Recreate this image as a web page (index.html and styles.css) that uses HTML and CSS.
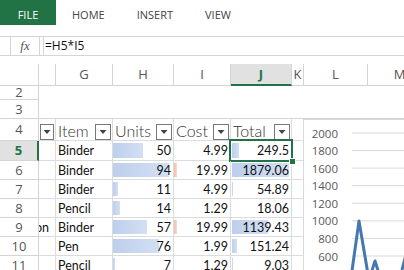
FILE: index.html
```html
<!DOCTYPE html>
<html lang="en">
<head>
    <meta charset="UTF-8">
    <meta name="viewport" content="width=device-width, initial-scale=1.0">
    <title>Sales sheet</title>
    <link rel="stylesheet" href="styles.css">
</head>
<body>
    <div class="ribbon">
        <div class="tab tab-file">FILE</div>
        <div class="tab">HOME</div>
        <div class="tab">INSERT</div>
        <div class="tab">VIEW</div>
    </div>

    <div class="formula-bar">
        <div class="fx">fx</div>
        <div class="formula-input">=H5*I5</div>
    </div>

    <div class="sheet">
        <div class="row col-heads">
            <div class="col-head"></div>
            <div class="col-head"></div>
            <div class="col-head">G</div>
            <div class="col-head">H</div>
            <div class="col-head">I</div>
            <div class="col-head selected">J</div>
            <div class="col-head">K</div>
            <div class="col-head">L</div>
            <div class="col-head">M</div>
        </div>

        <div class="row row-2">
            <div class="rowhead">2</div>
            <div class="blank"></div>
        </div>
        <div class="row row-3">
            <div class="rowhead">3</div>
            <div class="blank blank-line"></div>
        </div>

        <div class="row row-4">
            <div class="rowhead">4</div>
            <div class="cell th"><span class="dd dd-narrow"></span></div>
            <div class="cell th"><span class="th-text">Item</span><span class="dd"></span></div>
            <div class="cell th"><span class="th-text">Units</span><span class="dd"></span></div>
            <div class="cell th"><span class="th-text">Cost</span><span class="dd"></span></div>
            <div class="cell th"><span class="th-text">Total</span><span class="dd"></span></div>
            <div class="cell"></div>
            <div class="cell"></div>
            <div class="cell"></div>
        </div>

        <div class="row row-5">
            <div class="rowhead selected">5</div>
            <div class="cell"></div>
            <div class="cell">Binder</div>
            <div class="cell num"><span class="bar" style="width:30px"></span><span class="val">50</span></div>
            <div class="cell num"><span class="val">4.99</span></div>
            <div class="cell num active"><span class="bar bar-total" style="width:7px"></span><span class="val">249.5</span></div>
            <div class="cell"></div>
            <div class="cell"></div>
            <div class="cell"></div>
        </div>

        <div class="row">
            <div class="rowhead">6</div>
            <div class="cell"></div>
            <div class="cell">Binder</div>
            <div class="cell num"><span class="bar" style="width:56px"></span><span class="val">94</span></div>
            <div class="cell num"><span class="bar bar-cost" style="width:3px"></span><span class="val">19.99</span></div>
            <div class="cell num"><span class="bar bar-total" style="width:57px"></span><span class="val">1879.06</span></div>
            <div class="cell"></div>
            <div class="cell"></div>
            <div class="cell"></div>
        </div>

        <div class="row">
            <div class="rowhead">7</div>
            <div class="cell"></div>
            <div class="cell">Binder</div>
            <div class="cell num"><span class="bar" style="width:5px"></span><span class="val">11</span></div>
            <div class="cell num"><span class="val">4.99</span></div>
            <div class="cell num"><span class="bar bar-total" style="width:1px"></span><span class="val">54.89</span></div>
            <div class="cell"></div>
            <div class="cell"></div>
            <div class="cell"></div>
        </div>

        <div class="row">
            <div class="rowhead">8</div>
            <div class="cell"></div>
            <div class="cell">Pencil</div>
            <div class="cell num"><span class="bar" style="width:7px"></span><span class="val">14</span></div>
            <div class="cell num"><span class="val">1.29</span></div>
            <div class="cell num"><span class="val">18.06</span></div>
            <div class="cell"></div>
            <div class="cell"></div>
            <div class="cell"></div>
        </div>

        <div class="row">
            <div class="rowhead">9</div>
            <div class="cell clip">on</div>
            <div class="cell">Binder</div>
            <div class="cell num"><span class="bar" style="width:34px"></span><span class="val">57</span></div>
            <div class="cell num"><span class="bar bar-cost" style="width:3px"></span><span class="val">19.99</span></div>
            <div class="cell num"><span class="bar bar-total" style="width:36px"></span><span class="val">1139.43</span></div>
            <div class="cell"></div>
            <div class="cell"></div>
            <div class="cell"></div>
        </div>

        <div class="row">
            <div class="rowhead">10</div>
            <div class="cell"></div>
            <div class="cell">Pen</div>
            <div class="cell num"><span class="bar" style="width:46px"></span><span class="val">76</span></div>
            <div class="cell num"><span class="val">1.99</span></div>
            <div class="cell num"><span class="bar bar-total" style="width:5px"></span><span class="val">151.24</span></div>
            <div class="cell"></div>
            <div class="cell"></div>
            <div class="cell"></div>
        </div>

        <div class="row">
            <div class="rowhead">11</div>
            <div class="cell"></div>
            <div class="cell">Pencil</div>
            <div class="cell num"><span class="bar" style="width:2px"></span><span class="val">7</span></div>
            <div class="cell num"><span class="val">1.29</span></div>
            <div class="cell num"><span class="bar bar-total" style="width:1px"></span><span class="val">9.03</span></div>
            <div class="cell"></div>
            <div class="cell"></div>
            <div class="cell"></div>
        </div>

        <!-- line chart floating over columns L:M -->
        <div class="chart">
            <svg width="110" height="170" viewBox="0 0 110 170">
                <g class="grid">
                    <line x1="48" y1="13" x2="110" y2="13"/>
                    <line x1="48" y1="30.6" x2="110" y2="30.6"/>
                    <line x1="48" y1="48.1" x2="110" y2="48.1"/>
                    <line x1="48" y1="65.7" x2="110" y2="65.7"/>
                    <line x1="48" y1="83.3" x2="110" y2="83.3"/>
                    <line x1="48" y1="100.9" x2="110" y2="100.9"/>
                    <line x1="48" y1="118.4" x2="110" y2="118.4"/>
                    <line x1="48" y1="136" x2="110" y2="136"/>
                </g>
                <g class="axis">
                    <text x="34" y="13">2000</text>
                    <text x="34" y="30.6">1800</text>
                    <text x="34" y="48.1">1600</text>
                    <text x="34" y="65.7">1400</text>
                    <text x="34" y="83.3">1200</text>
                    <text x="34" y="100.9">1000</text>
                    <text x="34" y="118.4">800</text>
                    <text x="34" y="136">600</text>
                </g>
                <polyline class="series" points="46,165 55,101 65,160 71,141 77,160 94,166 100,142 106,120"/>
            </svg>
        </div>
    </div>
</body>
</html>
```

FILE: styles.css
```css
body {
    margin: 0;
    width: 404px;
    height: 270px;
    overflow: hidden;
    background-color: #fff;
    font-family: "Open Sans", "Liberation Sans", sans-serif;
}

/* ribbon tabs */
.ribbon {
    display: flex;
    align-items: flex-start;
    height: 36px;
    border-bottom: 1px solid #d5d5d5;
}

.tab {
    height: 25px;
    line-height: 29px;
    padding: 0 16px;
    font-size: 11px;
    color: #444;
}

.tab-file {
    width: 56px;
    padding: 0;
    text-align: center;
    background-color: #217346;
    color: #fff;
}

/* formula bar */
.formula-bar {
    display: flex;
    height: 18px;
    border-bottom: 1px solid #d5d5d5;
    margin-bottom: 8px;
}

.fx {
    width: 30px;
    margin-left: 10px;
    box-sizing: border-box;
    border-left: 1px solid #d5d5d5;
    border-right: 1px solid #d5d5d5;
    text-align: center;
    line-height: 18px;
    font-family: "Liberation Serif", serif;
    font-style: italic;
    font-size: 13px;
    color: #555;
}

.formula-input {
    flex: 1;
    margin-left: 3px;
    padding-left: 1px;
    border-left: 1px solid #d5d5d5;
    line-height: 18px;
    font-size: 12px;
    color: #111;
}

/* sheet grid */
.sheet {
    position: relative;
}

.row {
    display: grid;
    grid-template-columns: 39px 17px 57px 61px 57px 61px 12px 64px 64px;
    height: 19px;
}

.row > div {
    box-sizing: border-box;
}

.col-heads { height: 21px; }
.row-2 { height: 15px; }
.row-3 { height: 19px; }
.row-4 { height: 22px; }
.row-5 { height: 20px; }

.col-head {
    border-right: 1px solid #d4d4d4;
    border-bottom: 1px solid #d4d4d4;
    text-align: center;
    line-height: 20px;
    font-size: 13px;
    color: #555;
}

.col-head.selected {
    background-color: #e1e1e1;
    border-bottom: 2px solid #217346;
    color: #217346;
    font-weight: bold;
}

.rowhead {
    display: flex;
    align-items: center;
    justify-content: center;
    border-right: 1px solid #d4d4d4;
    border-bottom: 1px solid #d4d4d4;
    line-height: 1;
    font-size: 13px;
    color: #555;
}

.rowhead.selected {
    background-color: #e1e1e1;
    border-right: 2px solid #217346;
    color: #217346;
    font-weight: bold;
}

.blank {
    grid-column: 2 / -1;
}

.blank-line {
    border-bottom: 1px solid #d4d4d4;
}

.cell {
    position: relative;
    display: flex;
    align-items: center;
    padding: 0 2px;
    border-right: 1px solid #dadcdd;
    border-bottom: 1px solid #dadcdd;
    font-family: Lato, "Liberation Sans", sans-serif;
    font-size: 12.5px;
    color: #111;
    white-space: nowrap;
}

/* text spilling in from the hidden column E */
.cell.clip {
    overflow: hidden;
    justify-content: flex-end;
    padding: 0 6px 0 0;
}

/* table header row */
.th {
    align-items: flex-end;
    justify-content: space-between;
    padding: 0;
}

.th-text {
    padding-left: 2px;
    line-height: 18px;
    font-size: 16px;
    font-weight: 300;
    color: #333;
}

.dd {
    display: flex;
    align-items: center;
    justify-content: center;
    width: 16px;
    height: 16px;
    margin-right: 1px;
    box-sizing: border-box;
    border: 1px solid #777;
    background-color: #fff;
}

.dd::after {
    content: "";
    width: 7px;
    height: 4px;
    background-color: #444;
    clip-path: polygon(0 0, 100% 0, 50% 100%);
}

.dd-narrow {
    width: 14px;
    margin-left: 1px;
    margin-right: 0;
}

/* numbers and data bars */
.num {
    justify-content: flex-end;
}

.val {
    position: relative;
}

.bar {
    position: absolute;
    left: 0;
    top: 2px;
    bottom: 2px;
    background: linear-gradient(to right, #bccfec, #d3e0f3);
}

.bar-total {
    left: 1px;
}

.bar-cost {
    background: linear-gradient(to right, #efbda8, #f7dcd0);
}

/* active cell J5 */
.cell.active::after {
    content: "";
    position: absolute;
    left: -2px;
    top: -2px;
    right: -2px;
    bottom: -2px;
    border: 2px solid #217346;
}

.cell.active::before {
    content: "";
    position: absolute;
    right: -5px;
    bottom: -5px;
    width: 5px;
    height: 5px;
    background-color: #217346;
    border: 1px solid #fff;
    z-index: 2;
}

/* chart */
.chart {
    position: absolute;
    left: 303px;
    top: 55px;
    width: 110px;
    height: 170px;
    background-color: #fff;
    border: 1px solid #d9d9d9;
    z-index: 5;
}

.chart svg {
    display: block;
}

.grid line {
    stroke: #d9d9d9;
    stroke-width: 1;
}

.axis text {
    font-family: "Open Sans", sans-serif;
    font-size: 11.5px;
    fill: #595959;
    text-anchor: end;
    dominant-baseline: central;
}

.series {
    fill: none;
    stroke: #4677b0;
    stroke-width: 3;
    stroke-linejoin: round;
}
```
